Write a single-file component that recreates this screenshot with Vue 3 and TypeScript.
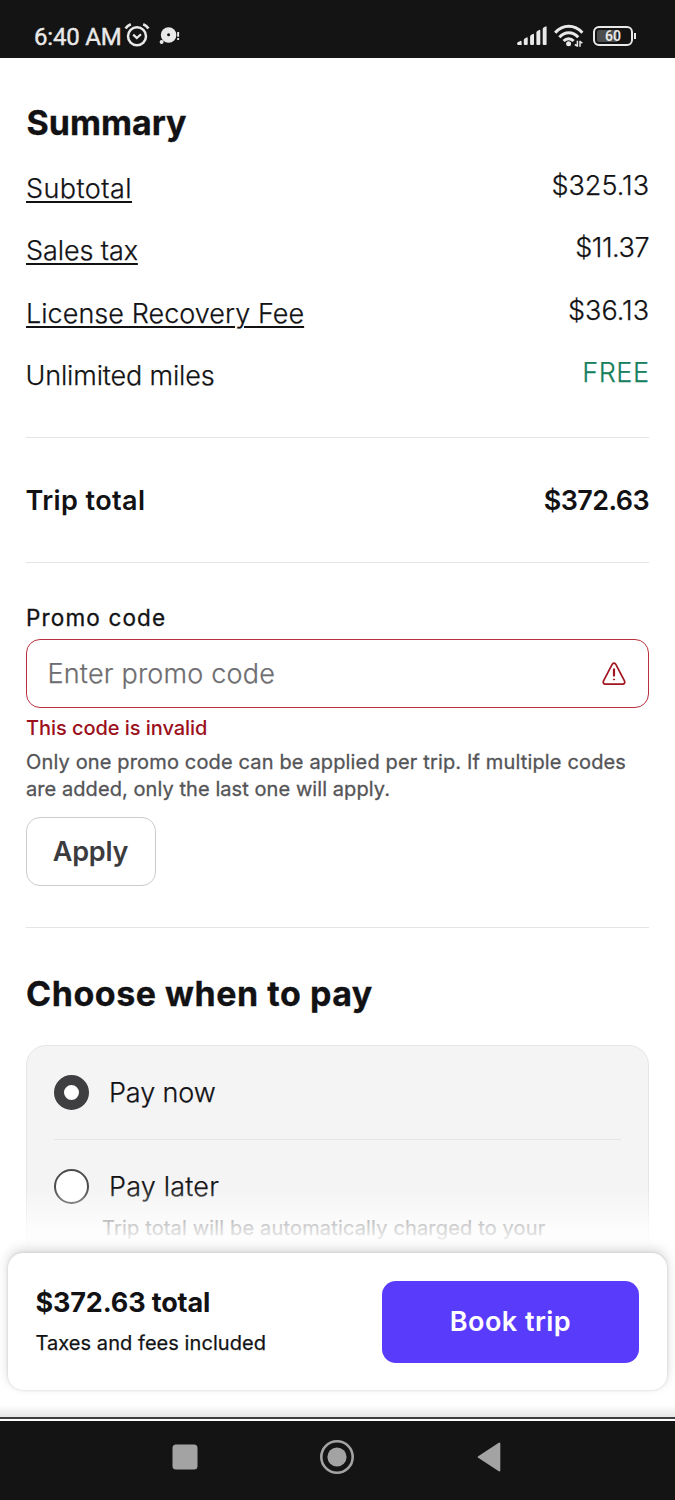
<script setup lang="ts">
import { ref } from 'vue'

interface FeeLine {
  id: string
  label: string
  amount: string
  linked: boolean
}

const fees: FeeLine[] = [
  { id: 'subtotal', label: 'Subtotal', amount: '$325.13', linked: true },
  { id: 'tax', label: 'Sales tax', amount: '$11.37', linked: true },
  { id: 'license', label: 'License Recovery Fee', amount: '$36.13', linked: true },
  { id: 'miles', label: 'Unlimited miles', amount: 'FREE', linked: false },
]

const code = ref('')
const payment = ref<'now' | 'later'>('now')
</script>

<template>
  <div class="screen">
    <header class="status">
      <span class="clock">6:40 AM</span>
      <svg class="alarm" width="26" height="26" viewBox="0 0 26 26" fill="none" stroke="#e9e9e9">
        <circle cx="13" cy="14.2" r="9" stroke-width="2.5" />
        <path d="M9.2 12.6l3.6 3.5 4.2-3.8" stroke-width="2.2" />
        <path d="M1.6 6.5q1.8-2.9 5.2-4.3M24.4 6.5q-1.8-2.9-5.2-4.3" stroke-width="2.7" />
      </svg>
      <svg class="chat" width="22" height="20" viewBox="0 0 22 20" fill="#e9e9e9">
        <circle cx="9.6" cy="9" r="7.8" />
        <circle cx="2.6" cy="16" r="2" />
        <circle cx="9.6" cy="8.8" r="1.5" fill="#141414" />
        <path d="M18.2 6h1.9v4.8h-1.9zM18.2 12h1.9v2h-1.9z" />
      </svg>
      <svg class="signal" width="30" height="20" viewBox="0 0 30 20" fill="#e9e9e9">
        <path d="M0 17.6q0-1.2 1.2-1.7l2.2-1q1.2-.4 1.2.8V19H1.2Q0 19 0 17.6z" />
        <path d="M6.8 14q0-1 .9-1.5l1.9-1q1.1-.5 1.1.7V18q0 1-1 1H7.8q-1 0-1-1z" />
        <path d="M13.1 10.4q0-1 .9-1.5l1.9-1q1.1-.5 1.1.7V18q0 1-1 1h-1.9q-1 0-1-1z" />
        <path d="M19.4 6.5q0-1 .9-1.5l1.9-1q1.1-.5 1.1.7V18q0 1-1 1h-1.9q-1 0-1-1z" />
        <path d="M25.7 3q0-1 .9-1.5l1.9-1q1.1-.5 1.1.7V18q0 1-1 1h-1.9q-1 0-1-1z" />
      </svg>
      <svg class="wifi" width="30" height="24" viewBox="0 0 30 24" fill="none" stroke="#e9e9e9" stroke-width="3">
        <path d="M1.2 8.7C9 .1 20.4.1 28.4 8.7" />
        <path d="M5.4 13.2c5.5-6 13.3-6 18.8 0" />
        <path d="M9.6 17.1c3-3.3 7-3.3 10 0" />
        <circle cx="14.6" cy="19.8" r="2.5" fill="#e9e9e9" stroke="none" />
        <path d="M23.4 16.8v6M20.8 20.5l2.6 1.5M26 22.8v-6M28.4 19.2l-2.4-1.5" stroke-width="1.5" />
      </svg>
      <div class="battery">
        <div class="cell"><span>60</span></div>
        <i></i>
      </div>
    </header>

    <main class="content">
      <h1 class="heading summary">Summary</h1>
      <dl class="fees">
        <div v-for="fee in fees" :key="fee.id" class="fee" :class="fee.id">
          <dt :class="{ linked: fee.linked }">{{ fee.label }}</dt>
          <dd>{{ fee.amount }}</dd>
        </div>
      </dl>

      <div class="total">
        <span class="total-label">Trip total</span>
        <span class="total-amount">$372.63</span>
      </div>

      <section class="promo">
        <label for="promo">Promo code</label>
        <div class="field">
          <input id="promo" v-model="code" type="text" placeholder="Enter promo code" />
          <svg width="24" height="24" viewBox="0 0 24 24" fill="none" stroke="#a01520" stroke-width="1.7" stroke-linejoin="round" stroke-linecap="round">
            <path d="M10.3 2.2q1.7-2.2 3.4 0l8.9 16.9q.8 2.9-2 3.1H3.4q-2.8-.2-2-3.1z" />
            <path d="M12 7.4v6.2" stroke-width="2.2" />
            <circle cx="12" cy="17.5" r=".6" stroke-width="1" fill="#a01520" />
          </svg>
        </div>
        <p class="error">This code is invalid</p>
        <p class="help">
          <span class="line first">Only one promo code can be applied per trip. If multiple codes</span>
          <span class="line">are added, only the last one will apply.</span>
        </p>
        <button class="apply" type="button">Apply</button>
      </section>

      <h2 class="heading choose">Choose when to pay</h2>
      <section class="options">
        <div class="option now" @click="payment = 'now'">
          <span class="radio" :class="{ checked: payment === 'now' }"></span>
          <span>Pay now</span>
        </div>
        <div class="option later" @click="payment = 'later'">
          <span class="radio" :class="{ checked: payment === 'later' }"></span>
          <span>Pay later</span>
        </div>
        <p class="note">Trip total will be automatically charged to your</p>
      </section>
    </main>

    <div class="dock">
      <div class="card">
        <div class="price">
          <strong>$372.63 total</strong>
          <span>Taxes and fees included</span>
        </div>
        <button class="book" type="button">Book trip</button>
      </div>
    </div>

    <nav class="system">
      <svg width="26" height="26" viewBox="0 0 26 26"><rect x=".5" y=".5" width="25" height="25" rx="3.5" fill="#a3a3a3" /></svg>
      <svg class="home" width="36" height="36" viewBox="0 0 36 36">
        <circle cx="18" cy="18" r="15.7" fill="none" stroke="#a3a3a3" stroke-width="2.6" />
        <circle cx="18" cy="18" r="9.6" fill="#a3a3a3" />
      </svg>
      <svg width="24" height="30" viewBox="0 0 24 30"><path d="M1.2 14.2L21.4.9q1.9-1 1.9.9v26.4q0 1.9-1.9.9L1.2 15.8q-1.2-.8 0-1.6z" fill="#a3a3a3" /></svg>
    </nav>
  </div>
</template>

<style>
body {
  background: #fff;
}
</style>

<style scoped>
.screen,
.screen * {
  box-sizing: border-box;
}

.screen {
  position: relative;
  display: flex;
  flex-direction: column;
  width: 675px;
  height: 1500px;
  overflow: hidden;
  background: #fff;
  color: #121214;
  font-family: "Inter", "Liberation Sans", sans-serif;
}

h1, h2, p, dl, dd {
  margin: 0;
}

button, input {
  font-family: inherit;
}

.status {
  display: flex;
  flex: none;
  align-items: center;
  height: 58px;
  padding: 15px 43px 0 34px;
  background: #141414;
  color: #e9e9e9;
}

.clock {
  width: 90px;
  padding-top: 1px;
  font: 400 24px/30px "Roboto", sans-serif;
  letter-spacing: -0.2px;
  white-space: nowrap;
  -webkit-text-stroke: 0.4px currentColor;
}

.alarm {
  margin-top: -3px;
}

.chat {
  margin: -1px 0 0 9px;
}

.signal {
  margin: -1px 0 0 auto;
}

.wifi {
  margin: -1px 0 0 7px;
}

.battery {
  display: flex;
  align-items: center;
  margin: -2px 0 0 9px;
}

.cell {
  width: 40px;
  height: 20px;
  border: 2px solid #e9e9e9;
  border-radius: 6px;
  box-shadow: inset 0 0 0 2px #141414;
  background: linear-gradient(90deg, #4d4d4d 60%, #141414 60%);
  font: 600 14px/16px "Roboto", sans-serif;
  text-align: center;
}

.battery i {
  width: 2px;
  height: 6px;
  margin: 0 -4px 0 1px;
  background: #e9e9e9;
}

.content {
  height: 1194px;
  padding: 0 26px;
  overflow: hidden;
}

.heading {
  font-size: 34px;
  font-weight: 700;
  line-height: 40px;
  -webkit-text-stroke: 0.3px currentColor;
}

.summary {
  padding: 45px 0 0 0.5px;
}

.fees {
  height: 295px;
  padding-top: 14px;
  border-bottom: 1px solid #e4e4e6;
}

.fee {
  display: flex;
  justify-content: space-between;
  height: 62.4px;
  font-size: 27px;
  font-weight: 300;
  line-height: 63px;
  -webkit-text-stroke: 0.25px currentColor;
}

.fee dt {
  text-underline-offset: 3px;
  text-decoration-thickness: 2px;
}

.fee dd {
  margin-top: -3px;
}

.linked {
  text-decoration-line: underline;
}

.subtotal dt {
  letter-spacing: 0.45px;
}

.tax dt {
  letter-spacing: -0.1px;
}

.tax dd {
  letter-spacing: -0.5px;
}

.license dt {
  letter-spacing: 0.04px;
}

.miles dt {
  margin-left: -0.5px;
  letter-spacing: -0.15px;
}

.miles dd {
  margin-right: -0.5px;
  color: #17805c;
  letter-spacing: 0.5px;
}

.total {
  display: flex;
  align-items: center;
  justify-content: space-between;
  height: 125px;
  border-bottom: 1px solid #e4e4e6;
  font-size: 27px;
  font-weight: 600;
}

.total-label {
  margin-left: -0.5px;
  letter-spacing: 0.4px;
}

.total-amount {
  letter-spacing: -0.6px;
}

.promo {
  display: flex;
  flex-direction: column;
  height: 365px;
  padding-top: 40px;
  border-bottom: 1px solid #e4e4e6;
}

.promo label {
  height: 36px;
  font-size: 22.5px;
  font-weight: 400;
  line-height: 30px;
  letter-spacing: 1.15px;
  -webkit-text-stroke: 0.3px currentColor;
}

.field {
  display: flex;
  flex: none;
  align-items: center;
  height: 69px;
  padding: 0 22px 0 20.5px;
  border: 1.5px solid #b8303b;
  border-radius: 14px;
}

.field input {
  flex: 1;
  height: 40px;
  padding: 0;
  border: 0;
  outline: 0;
  background: none;
  color: #121214;
  font-size: 27px;
  font-weight: 300;
  letter-spacing: 0.2px;
}

.field input::placeholder {
  color: #6e6e71;
  opacity: 1;
  -webkit-text-stroke: 0.25px #6e6e71;
}

.error {
  margin-top: 8px;
  color: #9b101c;
  font-size: 20px;
  font-weight: 500;
  line-height: 24px;
  letter-spacing: -0.05px;
}

.help {
  margin-top: 9px;
  color: #545457;
  font-size: 20px;
  font-weight: 400;
  line-height: 27px;
  letter-spacing: 0.07px;
  -webkit-text-stroke: 0.3px currentColor;
}

.line {
  display: block;
  white-space: nowrap;
}

.first {
  letter-spacing: 0.15px;
}

.apply {
  width: 130px;
  height: 69px;
  margin-top: 14px;
  padding: 0 1px 0 0;
  border: 1px solid #cbcbcd;
  border-radius: 14px;
  background: #fff;
  color: #3c3c3f;
  font-size: 27px;
  font-weight: 600;
  letter-spacing: -0.2px;
}

.choose {
  padding-top: 46px;
  letter-spacing: 0.53px;
}

.options {
  height: 280px;
  margin-top: 31px;
  padding: 0 27px;
  border: 1px solid #e6e6e7;
  border-radius: 20px;
  background: #f4f4f4;
  font-size: 27px;
  font-weight: 300;
  -webkit-text-stroke: 0.25px currentColor;
}

.option {
  display: flex;
  align-items: center;
  gap: 20px;
}

.now {
  height: 94px;
  padding-bottom: 1px;
  letter-spacing: -0.1px;
  border-bottom: 1px solid #e4e4e6;
}

.later {
  height: 92px;
  letter-spacing: 0.2px;
}

.radio {
  width: 35px;
  height: 35px;
  border: 2px solid #4c4c4f;
  border-radius: 50%;
  background: #fff;
}

.radio.checked {
  border: 10.5px solid #3f3f42;
}

.note {
  margin: -17px 0 0 48px;
  color: #545457;
  font-size: 20px;
  font-weight: 400;
  line-height: 26px;
  letter-spacing: 0.16px;
  white-space: nowrap;
}

.dock {
  position: absolute;
  inset: 1187px 0 83px;
  padding: 66px 8px 0;
  background:
    linear-gradient(0deg, #e6e6e6 0, rgba(255, 255, 255, 0) 12px),
    linear-gradient(180deg, rgba(255, 255, 255, 0) 0, rgba(255, 255, 255, 0.7) 38px, #fff 60px);
}

.card {
  display: flex;
  align-items: center;
  justify-content: space-between;
  height: 137px;
  padding: 0 28px;
  border-radius: 15px;
  background: #fff;
  box-shadow: 0 0 3px rgba(0, 0, 0, 0.15), 0 -4px 12px rgba(0, 0, 0, 0.15);
}

.price {
  display: flex;
  flex-direction: column;
  gap: 11px;
  margin-left: -0.5px;
}

.price strong {
  font-size: 27px;
  font-weight: 700;
  line-height: 32px;
  letter-spacing: -0.15px;
}

.price span {
  font-size: 20px;
  font-weight: 400;
  line-height: 26px;
  letter-spacing: 0.06px;
  -webkit-text-stroke: 0.25px currentColor;
}

.book {
  width: 257px;
  height: 82px;
  padding: 0;
  border: 0;
  border-radius: 14px;
  background: #593bfb;
  color: #fff;
  font-size: 27px;
  font-weight: 600;
  letter-spacing: 0.45px;
}

.system {
  position: relative;
  display: flex;
  align-items: center;
  justify-content: space-between;
  height: 83px;
  margin-top: auto;
  padding: 0 174px 5px 172px;
  border-top: 2px solid #3e3e40;
  background: linear-gradient(180deg, #fff 0, #fff 2px, #141414 2px);
}

.home {
  margin-right: 1px;
}
</style>
